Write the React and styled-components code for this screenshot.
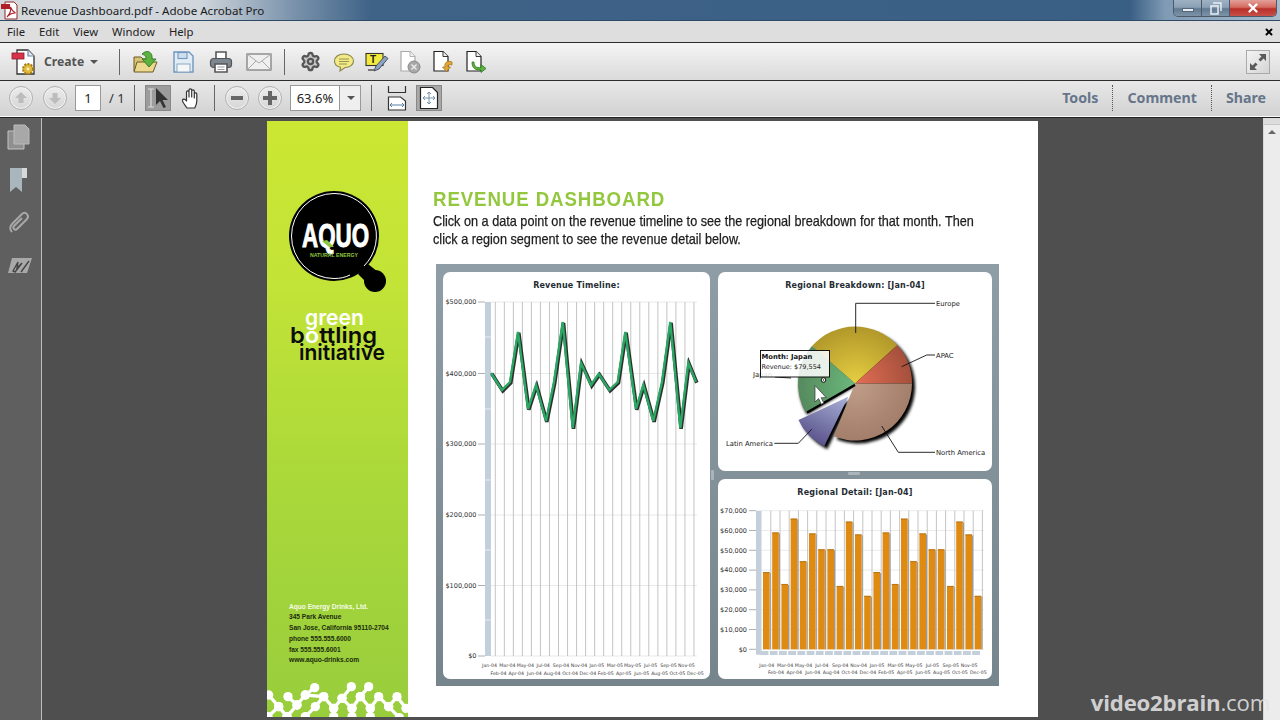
import React from "react";
import styled, { createGlobalStyle } from "styled-components";
import { Settings, X } from "lucide-react";

const GlobalStyle = createGlobalStyle`
  html, body { margin: 0; padding: 0; background: #4f4f4f; }
  * { box-sizing: border-box; }
  #root { width: 1280px; height: 720px; overflow: hidden; }
`;

const UI_FONT = `"Noto Sans", "Open Sans", sans-serif`;
const CHART_FONT = `"DejaVu Sans", sans-serif`;

const Shell = styled.div`
  position: relative;
  width: 1280px;
  height: 720px;
  display: flex;
  flex-direction: column;
  overflow: hidden;
  font-family: ${UI_FONT};
`;

/* ---------- window chrome ---------- */
const TitleBar = styled.div`
  height: 21px;
  flex: none;
  display: flex;
  align-items: flex-start;
  background: linear-gradient(90deg, #d4d8dc 0, #d0d6dc 200px, #7d95ad 290px, #3f6387 370px, #3a5f85 1130px, #7f9ab3 1165px, #a9bccd 1280px);
  border-bottom: 1px solid #2d4a66;
`;
const TitleIcon = styled.svg`
  width: 17px;
  height: 19px;
  margin: 1px 3px 0 1px;
  flex: none;
`;
const TitleText = styled.span`
  font-size: 11.6px;
  line-height: 21px;
  color: #1a1a1a;
`;
const WindowButtons = styled.div`
  margin-left: auto;
  margin-right: 3px;
  display: flex;
  height: 17px;
  border: 1px solid #4a5a6a;
  border-top: none;
  border-radius: 0 0 5px 5px;
  overflow: hidden;
`;
const WindowButton = styled.div`
  width: ${(p) => p.$w}px;
  display: flex;
  align-items: center;
  justify-content: center;
  background: ${(p) =>
    p.$close
      ? "linear-gradient(#e2a09a 0, #d56a60 45%, #b9302a 55%, #c85048 100%)"
      : "linear-gradient(#9fb2c4 0, #8ba0b4 45%, #627a90 55%, #7d93a8 100%)"};
  border-left: ${(p) => (p.$first ? "none" : "1px solid #4a5a6a")};
`;
const MinGlyph = styled.div`
  width: 12px;
  height: 4px;
  margin-top: 3px;
  background: #e6ecf2;
  border: 1px solid #54687a;
`;

const MenuBar = styled.div`
  height: 21px;
  flex: none;
  display: flex;
  align-items: center;
  gap: 14px;
  padding: 0 7px;
  background: #dedede;
  font-size: 11.3px;
  color: #222;
`;
const MenuClose = styled.span`
  margin-left: auto;
  margin-right: -1px;
  display: flex;
  color: #000;
`;

const ToolbarTop = styled.div`
  height: 38px;
  flex: none;
  display: flex;
  align-items: center;
  background: linear-gradient(#f5f5f5, #dadada);
  border-top: 1px solid #2c2c2c;
`;
const ToolbarBottom = styled.div`
  height: 37px;
  flex: none;
  display: flex;
  align-items: center;
  padding-bottom: 2px;
  background: linear-gradient(#e8e8e8, #d2d2d2);
  border-top: 1px solid #2c2c2c;
  border-bottom: 1px solid #fafafa;
`;
const CreateButton = styled.div`
  width: 119px;
  display: flex;
  align-items: center;
  padding-left: 11px;
  font-size: 12.2px;
  font-weight: 700;
  color: #555;
`;
const CreateLabel = styled.span`
  margin-left: 7px;
`;
const Caret = styled.span`
  width: 0;
  height: 0;
  margin-left: ${(p) => p.$ml || 6}px;
  border-left: 4px solid transparent;
  border-right: 4px solid transparent;
  border-top: 4px solid #555;
`;
const Divider = styled.div`
  width: 1px;
  height: 26px;
  flex: none;
  background: #666;
  margin-left: ${(p) => p.$ml || 0}px;
  margin-right: ${(p) => p.$mr || 0}px;
`;
const IconCell = styled.div`
  width: ${(p) => p.$w}px;
  height: 30px;
  flex: none;
  padding-left: ${(p) => p.$pl || 0}px;
  display: flex;
  align-items: center;
  justify-content: center;
  color: #555;
`;
const Expand = styled.div`
  margin-left: auto;
  margin-right: 10px;
  width: 24px;
  height: 24px;
  border: 1px solid #aaa;
  background: linear-gradient(135deg, #f4f4f4, #d4d4d4);
  display: flex;
  align-items: center;
  justify-content: center;
`;
const RoundButton = styled.div`
  width: 24px;
  height: 24px;
  flex: none;
  border-radius: 50%;
  border: 1px solid #b0b0b0;
  background: linear-gradient(#ececec, #d6d6d6);
  box-shadow: inset 0 0 0 1px #f2f2f2;
  display: flex;
  align-items: center;
  justify-content: center;
  margin-left: ${(p) => p.$ml}px;
`;
const PageInput = styled.div`
  width: 26px;
  height: 26px;
  flex: none;
  margin-left: 8px;
  background: #fff;
  border: 1px solid #999;
  font-size: 13px;
  color: #222;
  display: flex;
  align-items: center;
  justify-content: center;
`;
const PageTotal = styled.span`
  width: 33px;
  padding-left: 8px;
  font-size: 13px;
  color: #333;
  white-space: pre;
`;
const ToggleBox = styled.div`
  width: 26px;
  height: 26px;
  flex: none;
  background: ${(p) => p.$bg};
  border: 1px solid #888;
  margin-left: ${(p) => p.$ml || 0}px;
  display: flex;
  align-items: center;
  justify-content: center;
`;
const ZoomField = styled.div`
  width: 71px;
  height: 26px;
  flex: none;
  margin-left: 8px;
  display: flex;
  background: #fff;
  border: 1px solid #999;
  font-size: 13px;
  color: #222;
`;
const ZoomValue = styled.div`
  width: 48px;
  display: flex;
  align-items: center;
  justify-content: center;
`;
const ZoomDrop = styled.div`
  flex: 1;
  border-left: 1px solid #999;
  background: #efefef;
  display: flex;
  align-items: center;
  justify-content: center;
`;
const PaneLinks = styled.div`
  margin-left: auto;
  display: flex;
  align-items: center;
  height: 100%;
  padding-right: 14px;
`;
const PaneLink = styled.div`
  font-size: 14.2px;
  font-weight: 700;
  color: #66758a;
  padding: 0 14px;
  line-height: 26px;
  border-left: ${(p) => (p.$first ? "none" : "1px dotted #555")};
  &:last-child {
    padding-right: 0;
  }
`;

/* ---------- viewer ---------- */
const Viewer = styled.div`
  flex: 1;
  min-height: 0;
  display: flex;
  background: #4f4f4f;
  border-top: 1px solid #222;
`;
const Rail = styled.div`
  width: 42px;
  flex: none;
  background: #5f5f5f;
  border-right: 1px solid #bdbdbd;
  display: flex;
  flex-direction: column;
  align-items: center;
  gap: 13px;
  padding-top: 4px;
`;
const RailIcon = styled.svg`
  width: 30px;
  height: 30px;
  flex: none;
  margin-left: -3px;
`;
const Canvas = styled.div`
  flex: 1;
  min-width: 0;
  padding: 3px 0 0 225px;
`;
const Scrollbar = styled.div`
  width: 17px;
  flex: none;
  background: #ececec;
  border-left: 1px solid #d8d8d8;
`;
const ScrollCap = styled.div`
  height: 7px;
  background: #dcdcdc;
  border-bottom: 1px solid #c8c8c8;
`;
const ScrollArrow = styled.div`
  width: 0;
  height: 0;
  margin: 5px auto 0;
  border-left: 4px solid transparent;
  border-right: 4px solid transparent;
  border-bottom: 4px solid #666;
`;
const Watermark = styled.div`
  position: absolute;
  right: 10px;
  bottom: 4px;
  font-family: "Open Sans", sans-serif;
  font-size: 22.2px;
  line-height: 26px;
  font-weight: 700;
  color: rgba(226, 226, 226, 0.9);
  letter-spacing: -0.2px;
  & span {
    font-weight: 400;
  }
`;

/* ---------- pdf page ---------- */
const Page = styled.div`
  width: 771px;
  height: 596px;
  display: flex;
  background: #fff;
`;
const Sidebar = styled.div`
  width: 141px;
  flex: none;
  display: flex;
  flex-direction: column;
  background: linear-gradient(#cce733 0, #c2e337 28%, #a9d83a 62%, #98cd3c 100%);
`;
const LogoSvg = styled.svg`
  display: block;
  width: 105px;
  height: 107px;
  margin: 67px 0 0 18px;
  flex: none;
  overflow: visible;
`;
const MarkSvg = styled.svg`
  display: block;
  width: 105px;
  height: 60px;
  margin: 10px 0 0 18px;
  flex: none;
  overflow: visible;
`;
const Address = styled.div`
  margin-top: auto;
  padding-left: 22px;
  font-family: "Liberation Sans", sans-serif;
  font-size: 6.6px;
  font-weight: 700;
  line-height: 10.75px;
  color: #1c2c10;
  white-space: nowrap;
`;
const AddressName = styled.div`
  color: #f6fbe6;
`;
const PatternSvg = styled.svg`
  display: block;
  width: 141px;
  height: 36px;
  margin-top: 15px;
  flex: none;
`;
const Content = styled.div`
  flex: 1;
  min-width: 0;
  padding: 66px 0 0 25px;
`;
const Heading = styled.h1`
  margin: 0;
  font-family: "Liberation Sans", sans-serif;
  font-size: 21px;
  line-height: 24px;
  font-weight: 700;
  letter-spacing: 1px;
  color: #93c83e;
  white-space: nowrap;
  transform: scaleX(0.89);
  transform-origin: left center;
`;
const Intro = styled.p`
  margin: 1px 0 0;
  font-family: "Liberation Sans", sans-serif;
  font-size: 14.5px;
  line-height: 18px;
  font-weight: 400;
  color: #1c1c1c;
  -webkit-text-stroke: 0.25px #1c1c1c;
  white-space: nowrap;
  transform: scaleX(0.874);
  transform-origin: left center;
`;
const IntroLine = styled.span`
  display: block;
`;
const Board = styled.div`
  position: relative;
  width: 563px;
  height: 422px;
  margin: 16px 0 0 3px;
  padding: 8px 7px 7px;
  display: grid;
  grid-template-columns: 267px 274px;
  grid-template-rows: 199px 200px;
  gap: 8px;
  background: linear-gradient(#8f9da6, #76848c);
`;
const Card = styled.div`
  background: #fff;
  border-radius: 7px;
  overflow: hidden;
  display: flex;
  flex-direction: column;
  grid-row: ${(p) => p.$row || "auto"};
`;
const CardTitle = styled.div`
  height: 26px;
  flex: none;
  text-align: center;
  font-family: ${CHART_FONT};
  font-size: 8px;
  line-height: 27px;
  font-weight: 700;
  letter-spacing: 0.18px;
  color: #1f2d33;
`;
const ChartSvg = styled.svg`
  display: block;
  flex: none;
  font-family: ${CHART_FONT};
`;
const Handle = styled.div`
  position: absolute;
  background: #aab4ba;
  border-radius: 1px;
  left: ${(p) => p.$x}px;
  top: ${(p) => p.$y}px;
  width: ${(p) => p.$w}px;
  height: ${(p) => p.$h}px;
`;

/* ---------- chart data ---------- */
const months = ["Jan", "Feb", "Mar", "Apr", "May", "Jun", "Jul", "Aug", "Sep", "Oct", "Nov", "Dec"];
const monthLabels = [...months.map((m) => `${m}-04`), ...months.map((m) => `${m}-05`)];

// traced from the picture, page coordinates
const timeline = [
  [491, 373], [502, 390], [510, 382], [518, 332], [528, 409], [536, 385],
  [546, 421], [554, 382], [562.7, 322], [572.7, 428], [581, 363], [591, 385],
  [598.7, 374], [609.3, 390], [617.7, 382], [625.3, 332], [636, 409], [643.3, 385],
  [653.3, 421], [662, 382], [670.3, 322], [680.3, 428], [688.3, 363], [696, 382],
];
const regionValues = [39, 59, 33, 66, 44.5, 58.5, 50.5, 50.5, 32, 64.5, 58, 27];
const barValues = [...regionValues, ...regionValues];

const wedge = (cx, cy, r, a0, a1) => {
  const rad = (a) => (a * Math.PI) / 180;
  const x0 = cx + r * Math.cos(rad(a0));
  const y0 = cy + r * Math.sin(rad(a0));
  const x1 = cx + r * Math.cos(rad(a1));
  const y1 = cy + r * Math.sin(rad(a1));
  return `M${cx} ${cy}L${x0} ${y0}A${r} ${r} 0 ${a1 - a0 > 180 ? 1 : 0} 1 ${x1} ${y1}Z`;
};

/* ---------- charts ---------- */
const TimelineChart = () => {
  const ticks = [
    ["$500,000", 302], ["$400,000", 373.5], ["$300,000", 444],
    ["$200,000", 515], ["$100,000", 585.5], ["$0", 656],
  ];
  const points = timeline.map((p) => p.join(",")).join(" ");
  return (
    <ChartSvg width="267" height="381" viewBox="443 298 267 381">
      <defs>
        <filter id="lineShadow" x="-5%" y="-5%" width="110%" height="110%">
          <feGaussianBlur stdDeviation="0.5" />
        </filter>
      </defs>
      {ticks.map(([label, y]) => (
        <g key={label}>
          <line x1="491" x2="697" y1={y} y2={y} stroke="#e9e9e9" strokeWidth="1" />
          <line x1="478" x2="485" y1={y} y2={y} stroke="#999" strokeWidth="0.8" />
          <text x="476.5" y={y + 2.3} textAnchor="end" fontSize="6.5" fill="#333">{label}</text>
        </g>
      ))}
      <rect x="485" y="302" width="6" height="354" fill="#c3cfdb" />
      {[337, 409, 480, 550, 620].map((y) => (
        <line key={y} x1="485" x2="491" y1={y} y2={y} stroke="#e8edf2" strokeWidth="1" />
      ))}
      {timeline.slice(0, 23).map((_, i) => (
        <line key={i} x1={495.3 + i * 9.03} x2={495.3 + i * 9.03} y1="302" y2="656" stroke="#bdbdbd" strokeWidth="0.9" />
      ))}
      <polyline points={points} fill="none" stroke="#1a1a1a" strokeOpacity="0.9" strokeWidth="3.6" strokeLinejoin="miter" transform="translate(0.8 0.8)" filter="url(#lineShadow)" />
      <polyline points={points} fill="none" stroke="#2aa763" strokeWidth="2.4" strokeLinejoin="miter" />
      {monthLabels.map((m, i) => (
        <text key={m} x={489.5 + i * 8.95} y={i % 2 ? 675 : 667} textAnchor="middle" fontSize="4.7" fill="#444">{m}</text>
      ))}
    </ChartSvg>
  );
};

const PieChart = () => {
  const cx = 855;
  const cy = 383.5;
  const r = 57;
  const leaders = [
    "855.7,333 855.7,303.3 935,303.3",
    "901.7,366.7 926.7,355 935,355",
    "881.7,426 898.3,452.3 935,452.3",
    "811.7,429.3 798.3,443.3 774.3,443.3",
  ];
  return (
    <ChartSvg width="274" height="173" viewBox="718 298 274 173">
      <defs>
        <radialGradient id="yellowFill" gradientUnits="userSpaceOnUse" cx={cx} cy={cy} r={r}>
          <stop offset="0" stopColor="#e6cf42" />
          <stop offset="1" stopColor="#b2982a" />
        </radialGradient>
        <radialGradient id="redFill" gradientUnits="userSpaceOnUse" cx={cx} cy={cy} r={r}>
          <stop offset="0" stopColor="#e56e55" />
          <stop offset="1" stopColor="#a4503c" />
        </radialGradient>
        <radialGradient id="tanFill" gradientUnits="userSpaceOnUse" cx={cx} cy={cy} r={r}>
          <stop offset="0" stopColor="#c09e8a" />
          <stop offset="1" stopColor="#a37e6a" />
        </radialGradient>
        <radialGradient id="greenFill" gradientUnits="userSpaceOnUse" cx={cx} cy={cy} r={r}>
          <stop offset="0" stopColor="#6cb87c" />
          <stop offset="1" stopColor="#558a5e" />
        </radialGradient>
        <linearGradient id="purpleFill" x1="0.8" y1="0" x2="0.3" y2="1">
          <stop offset="0" stopColor="#a3aad2" />
          <stop offset="1" stopColor="#544c86" />
        </linearGradient>
        <filter id="pieShadow" x="-15%" y="-15%" width="130%" height="130%">
          <feGaussianBlur stdDeviation="1.4" />
        </filter>
      </defs>
      <path d={wedge(cx, cy, r, -139, 112)} fill="#000" transform="translate(3 3)" filter="url(#pieShadow)" />
      <path d={wedge(cx, cy, r, 149, 221)} fill="#000" transform="translate(1 2)" filter="url(#pieShadow)" />
      <path d={wedge(848.3, 396.7, 55, 116, 155)} fill="#000" transform="translate(3 3)" filter="url(#pieShadow)" />
      <path d={wedge(cx, cy, r, 221, 318)} fill="url(#yellowFill)" />
      <path d={wedge(cx, cy, r, -42, 0)} fill="url(#redFill)" />
      <path d={wedge(cx, cy, r, 0, 112)} fill="url(#tanFill)" />
      <path d={wedge(cx, cy, r, 149, 221)} fill="url(#greenFill)" />
      <line x1="855" y1="385" x2="807" y2="412.5" stroke="#000" strokeWidth="2.2" />
      <path d={wedge(848.3, 396.7, 55, 116, 155)} fill="url(#purpleFill)" />
      {leaders.map((pts) => (
        <polyline key={pts} points={pts} fill="none" stroke="#111" strokeWidth="0.9" />
      ))}
      <g fontSize="6.8" fill="#222">
        <text x="936" y="305.5">Europe</text>
        <text x="936" y="357.5">APAC</text>
        <text x="936" y="454.5">North America</text>
        <text x="773" y="445.5" textAnchor="end">Latin America</text>
        <text x="753" y="376.5">Japan</text>
      </g>
      <line x1="775" y1="377" x2="791" y2="378" stroke="#111" strokeWidth="0.9" />
      <rect x="760.5" y="350.5" width="69" height="26.5" fill="#fff" fillOpacity="0.86" stroke="#000" strokeWidth="0.9" />
      <text x="761.5" y="359" fontSize="6.8" fontWeight="700" fill="#111">Month: Japan</text>
      <text x="761.5" y="368.5" fontSize="6.5" fill="#222">Revenue: $79,554</text>
      <circle cx="823.5" cy="380" r="2.3" fill="#fff" stroke="#111" strokeWidth="1" />
      <circle cx="823.5" cy="380" r="0.7" fill="#111" />
      <path d="M815 385.5v16.5l3.6-3.4 2.6 5.6 2.6-1.100-2.6-5.4h5z" fill="#fff" stroke="#333" strokeWidth="0.7" />
    </ChartSvg>
  );
};

const BarChart = () => {
  const base = 649.3;
  const scale = 138.6 / 70;
  const ticks = [0, 10, 20, 30, 40, 50, 60, 70];
  return (
    <ChartSvg width="274" height="174" viewBox="718 505 274 174">
      {ticks.map((t) => {
        const y = base - t * scale;
        return (
          <g key={t}>
            <line x1="761" x2="984" y1={y} y2={y} stroke="#e9e9e9" strokeWidth="0.9" />
            <line x1="749" x2="756" y1={y} y2={y} stroke="#999" strokeWidth="0.8" />
            <text x="747" y={y + 2.3} textAnchor="end" fontSize="6.5" fill="#333">
              {t === 0 ? "$0" : `$${t},000`}
            </text>
          </g>
        );
      })}
      <rect x="756" y="510.7" width="5.5" height="144" fill="#c3cfdb" />
      {barValues.map((v, i) => {
        const x = 763 + i * 9.2;
        const y = base - v * scale;
        return (
          <g key={i}>
            <line x1={x + 7.8} x2={x + 7.8} y1="510.7" y2={base} stroke="#bdbdbd" strokeWidth="0.9" />
            <rect x={x - 2.4} y="651" width="7.8" height="4" fill="#c3cfdb" />
            <rect x={x + 6.6} y={y + 1} width="1.2" height={base - y - 1} fill="#9a9a9a" />
            <rect x={x} y={y} width="6.6" height={base - y} fill="#df8a10" />
            <rect x={x} y={y} width="6.6" height="1" fill="#b8761c" />
          </g>
        );
      })}
      {monthLabels.map((m, i) => (
        <text key={m} x={766.7 + i * 9.2} y={i % 2 ? 674 : 666.5} textAnchor="middle" fontSize="4.7" fill="#444">{m}</text>
      ))}
    </ChartSvg>
  );
};

/* ---------- brand drawings ---------- */
const AquoLogo = () => (
  <LogoSvg viewBox="285 188 105 107">
    <path d="M368 264 L358 274 L368 284 L378 272 Z" fill="#000" />
    <circle cx="334" cy="236" r="45" fill="#000" />
    <circle cx="375" cy="281" r="11" fill="#000" />
    <path d="M334 193.5a42.5 42.5 0 0 1 30 72.5" fill="none" stroke="#fff" strokeWidth="1" />
    <path d="M334 193.5a42.5 42.5 0 0 0 0 85c6 0 11-1 16-3.5" fill="none" stroke="#fff" strokeWidth="1" />
    <text x="302" y="247" fontFamily="Liberation Sans, sans-serif" fontWeight="700" fontSize="34" fill="#fff" stroke="#fff" strokeWidth="1" textLength="67" lengthAdjust="spacingAndGlyphs">AQUO</text>
    <path d="M322 241l5-1 7 7h-5z" fill="#8fc63f" />
    <text x="310" y="256.5" fontFamily="Liberation Sans, sans-serif" fontWeight="700" fontSize="5.2" fill="#8fc63f" textLength="48" lengthAdjust="spacingAndGlyphs">NATURAL ENERGY</text>
  </LogoSvg>
);

const BottlingMark = () => (
  <MarkSvg viewBox="285 305 105 60">
    <g fontFamily="Inter, sans-serif" fontWeight="600" fontSize="22">
      <text x="305" y="324.5" fill="#fff" textLength="59" lengthAdjust="spacingAndGlyphs">green</text>
      <text x="290" y="343" fill="#0c0c0c" textLength="87" lengthAdjust="spacingAndGlyphs">
        b<tspan fill="#fff">o</tspan>ttling
      </text>
      <text x="299" y="360" fill="#0c0c0c" textLength="86" lengthAdjust="spacingAndGlyphs">initiative</text>
    </g>
  </MarkSvg>
);

const BlobPattern = () => {
  const chains = [
    [[20, 60], [50, 95], [75, 125]],
    [[78, 65], [105, 90], [130, 60], [158, 38]],
    [[105, 90], [75, 125]],
    [[130, 60], [185, 65], [215, 100], [240, 70], [268, 35]],
    [[185, 65], [160, 95], [130, 125]],
    [[240, 70], [270, 100], [295, 65], [320, 35]],
    [[295, 65], [325, 100], [350, 65], [380, 95], [405, 65], [432, 100]],
    [[380, 95], [412, 128]],
    [[270, 100], [270, 125]],
    [[215, 100], [215, 125]],
    [[325, 100], [325, 125]],
    [[50, 95], [18, 125]],
  ];
  return (
    <PatternSvg viewBox="15 18 423 108">
      {chains.map((pts) => (
        <g key={pts.join()}>
          <polyline points={pts.join(" ")} fill="none" stroke="#fff" strokeWidth="10" strokeLinejoin="round" />
          {pts.map(([x, y]) => (
            <circle key={`${x}-${y}`} cx={x} cy={y} r="14" fill="#fff" />
          ))}
        </g>
      ))}
    </PatternSvg>
  );
};

/* ---------- toolbar drawings ---------- */
const Ico = ({ w = 24, h = 24, vb = "0 0 24 24", children }) => (
  <svg width={w} height={h} viewBox={vb}>{children}</svg>
);

const CreateIcon = () => (
  <Ico w={26} h={30} vb="0 0 26 30">
    <path d="M6 3h11l6 6v18H6z" fill="#fff" stroke="#333" strokeWidth="1.3" />
    <path d="M17 3v6h6" fill="#dfe6ee" stroke="#6a87a8" strokeWidth="1.2" />
    <rect x="1" y="6" width="12" height="6" fill="#d8324a" stroke="#8a1c2c" strokeWidth="0.8" />
    <circle cx="17" cy="22" r="5" fill="#e4b83a" stroke="#a07c18" strokeWidth="2" strokeDasharray="2 1.2" />
    <circle cx="17" cy="22" r="1.4" fill="#fff3c4" />
  </Ico>
);
const OpenIcon = () => (
  <Ico w={26} h={26} vb="0 0 26 26">
    <path d="M2 22V8h7l2 2h10v12z" fill="#d9c277" stroke="#6a5a22" strokeWidth="1" />
    <path d="M2 23l3-10h20l-4 10z" fill="#ecd98f" stroke="#6a5a22" strokeWidth="1" />
    <path d="M10 5c4-4 9-3 10 2v3h4l-7 8-7-8h4V8c-1-2-2-2-4-3z" fill="#5cb13f" stroke="#2f7a22" strokeWidth="0.9" />
  </Ico>
);
const SaveIcon = () => (
  <Ico>
    <path d="M3 2h15l4 4v16H3z" fill="#e2ecf5" stroke="#6f97bf" strokeWidth="1.4" />
    <rect x="7" y="2.5" width="9" height="6" fill="#cfdeec" stroke="#6f97bf" strokeWidth="1.1" />
    <rect x="6" y="14" width="13" height="8" fill="#f6f6f6" stroke="#8aa8c6" strokeWidth="1" />
  </Ico>
);
const PrintIcon = () => (
  <Ico>
    <path d="M7 9V2h10v7" fill="#fff" stroke="#555" strokeWidth="1.6" />
    <rect x="1.5" y="8.5" width="21" height="9" rx="3" fill="#7d8790" stroke="#555" strokeWidth="1.2" />
    <path d="M6 14h12v8H6z" fill="#fff" stroke="#555" strokeWidth="1.6" />
    <path d="M8.5 17h7M8.5 19.5h7" stroke="#999" strokeWidth="1" />
  </Ico>
);
const MailIcon = () => (
  <Ico w={26} h={20} vb="0 0 26 20">
    <rect x="1" y="2" width="24" height="16" fill="#efefef" stroke="#777" strokeWidth="1.2" />
    <path d="M1 2l12 9 12-9M1 18l9-9M25 18l-9-9" fill="none" stroke="#aaa" strokeWidth="1" />
  </Ico>
);
const CommentIcon = () => (
  <Ico w={22} h={20} vb="0 0 22 20">
    <path d="M11 2C5.5 2 1.5 5 1.5 9c0 3 2.5 5.5 6 6.3L7 19l5-3.5c5 0 8.5-3 8.5-6.5S16.5 2 11 2z" fill="#f3ea86" stroke="#87864c" strokeWidth="1.1" />
    <path d="M6 7h10M6 9.5h10M6 12h8" stroke="#8d8c50" strokeWidth="0.9" />
  </Ico>
);
const TextNoteIcon = () => (
  <Ico>
    <rect x="1" y="3.5" width="17" height="12" fill="#f2ea3c" stroke="#333" strokeWidth="1.1" />
    <text x="5" y="13" fontFamily="Liberation Sans, sans-serif" fontWeight="700" fontSize="10" fill="#222">T</text>
    <path d="M9 21l2-5L20 6l3 2.5-9 10.5z" fill="#8aa4c4" stroke="#445" strokeWidth="0.9" />
    <path d="M3 19h6v2H3z" fill="#777" />
  </Ico>
);
const DocBase = ({ stroke = "#222", children }) => (
  <Ico w={22} h={24} vb="0 0 22 24">
    <path d="M2 1.5h9l5 5V21H2z" fill="#fff" stroke={stroke} strokeWidth="1.2" />
    <path d="M11 1.5v5h5" fill="#eef2f6" stroke={stroke} strokeWidth="0.9" />
    {children}
  </Ico>
);
const UpDownIcon = ({ dir }) => (
  <svg width="14" height="14" viewBox="0 0 14 14">
    <path d={dir === "up" ? "M7 1l6 6H9.5v5h-5V7H1z" : "M7 13l6-6H9.5V2h-5v5H1z"} fill="#bcbcbc" />
  </svg>
);
const SelectIcon = () => (
  <Ico w={24} h={24}>
    <path d="M2 3h6M5 3v18M2 21h6" fill="none" stroke="#ddd" strokeWidth="1.2" />
    <path d="M10 2v17l4-4 3.5 7 2.5-1-3.5-7h5.5z" fill="#333" />
  </Ico>
);
const HandIcon = () => (
  <Ico w={22} h={24} vb="0 0 22 24">
    <path d="M6 22c-2-3-5-6-4.5-8 .5-1.5 2.5-1 4 1V6c0-1.5 2.5-1.5 2.5 0v5V4c0-1.5 2.7-1.5 2.7 0v7V5c0-1.5 2.6-1.5 2.6 0v7V8c0-1.5 2.5-1.5 2.5 0v7c0 3-1 5-2 7z" fill="#fff" stroke="#333" strokeWidth="1.2" strokeLinejoin="round" />
  </Ico>
);
const FitWidthIcon = () => (
  <Ico w={20} h={26} vb="0 0 20 26">
    <path d="M1.5 1v6.5h17V1" fill="none" stroke="#333" strokeWidth="1.2" />
    <path d="M1.5 25V12h12l5 4v9z" fill="#fff" stroke="#333" strokeWidth="1.2" />
    <path d="M3 20h14M3 20l2-2M3 20l2 2M17 20l-2-2M17 20l-2 2" stroke="#5a7ea6" strokeWidth="1" fill="none" />
  </Ico>
);
const FitPageIcon = () => (
  <Ico w={20} h={24} vb="0 0 20 24">
    <path d="M1.5 1.5h12l5 5v16h-17z" fill="#fff" stroke="#222" strokeWidth="1.2" />
    <path d="M10 6v12M4 12h12M10 6l-2 2M10 6l2 2M10 18l-2-2M10 18l2-2M4 12l2-2M4 12l2 2M16 12l-2-2M16 12l-2 2" stroke="#6a8aa8" strokeWidth="0.9" fill="none" />
  </Ico>
);

export default function App() {
  return (
    <Shell>
      <GlobalStyle />
      <TitleBar>
        <TitleIcon viewBox="0 0 17 19">
          <path d="M4 1h9l3 3v14H4z" fill="#fff" stroke="#8a2a2a" strokeWidth="1" />
          <rect x="0" y="3" width="9" height="5" fill="#b01e28" />
          <path d="M6 16c3-3 4-7 3.5-10 1 3 3 5 5 6-3 0-6 1-8.5 4z" fill="none" stroke="#b01e28" strokeWidth="1.1" />
        </TitleIcon>
        <TitleText>Revenue Dashboard.pdf - Adobe Acrobat Pro</TitleText>
        <WindowButtons>
          <WindowButton $w={27} $first>
            <MinGlyph />
          </WindowButton>
          <WindowButton $w={28}>
            <svg width="13" height="13" viewBox="0 0 13 13">
              <path d="M4 1h8v8M2 4h7v8H2z" fill="none" stroke="#e8eef4" strokeWidth="1.5" />
            </svg>
          </WindowButton>
          <WindowButton $w={47} $close>
            <X size={14} strokeWidth={4} color="#fff" />
          </WindowButton>
        </WindowButtons>
      </TitleBar>

      <MenuBar>
        <span>File</span>
        <span>Edit</span>
        <span>View</span>
        <span>Window</span>
        <span>Help</span>
        <MenuClose>
          <X size={10} strokeWidth={4.5} />
        </MenuClose>
      </MenuBar>

      <ToolbarTop>
        <CreateButton>
          <CreateIcon />
          <CreateLabel>Create</CreateLabel>
          <Caret $ml={6} />
        </CreateButton>
        <Divider $mr={6} />
        <IconCell $w={38}><OpenIcon /></IconCell>
        <IconCell $w={38}><SaveIcon /></IconCell>
        <IconCell $w={38}><PrintIcon /></IconCell>
        <IconCell $w={38}><MailIcon /></IconCell>
        <Divider $ml={6} $mr={9} />
        <IconCell $w={33}><Settings size={21} strokeWidth={2.6} color="#555" fill="#c8c8c8" /></IconCell>
        <IconCell $w={33}><CommentIcon /></IconCell>
        <IconCell $w={33}><TextNoteIcon /></IconCell>
        <IconCell $w={33}>
          <DocBase stroke="#aaa">
            <circle cx="15" cy="17" r="6" fill="#a8a8a8" stroke="#8a8a8a" />
            <path d="M12.5 14.5l5 5M17.5 14.5l-5 5" stroke="#eee" strokeWidth="1.3" />
          </DocBase>
        </IconCell>
        <IconCell $w={33}>
          <DocBase>
            <path d="M20 12c-5-2-8 1-7 5h-2.5l4 4.5 4-4.5H16c-.5-2 1-3 4-2z" fill="#e0a63a" stroke="#a87618" strokeWidth="0.8" />
          </DocBase>
        </IconCell>
        <IconCell $w={33}>
          <DocBase>
            <path d="M9 12c0 5 3 6 7 5.5V14.5l5 4-5 4V20c-6 .5-9-2-9-8z" fill="#5cb13f" stroke="#2f7a22" strokeWidth="0.8" />
          </DocBase>
        </IconCell>
        <Expand>
          <svg width="20" height="20" viewBox="0 0 20 20">
            <path d="M11 2h7v7l-2.5-2.500-3 3-2-2 3-3zM9 18H2v-7l2.5 2.500 3-3 2 2-3 3z" fill="#5a5a5a" />
          </svg>
        </Expand>
      </ToolbarTop>

      <ToolbarBottom>
        <RoundButton $ml={9}><UpDownIcon dir="up" /></RoundButton>
        <RoundButton $ml={10}><UpDownIcon dir="down" /></RoundButton>
        <PageInput>1</PageInput>
        <PageTotal>/ 1</PageTotal>
        <Divider />
        <ToggleBox $ml={10} $bg="#9c9c9c"><SelectIcon /></ToggleBox>
        <IconCell $w={38} $pl={4}><HandIcon /></IconCell>
        <Divider $ml={5} />
        <RoundButton $ml={10}>
          <svg width="14" height="14" viewBox="0 0 14 14"><rect x="1" y="5" width="12" height="4" fill="#666" /></svg>
        </RoundButton>
        <RoundButton $ml={9}>
          <svg width="16" height="16" viewBox="0 0 16 16"><path d="M6 1h4v5h5v4h-5v5H6v-5H1V6h5z" fill="#666" /></svg>
        </RoundButton>
        <ZoomField>
          <ZoomValue>63.6%</ZoomValue>
          <ZoomDrop><Caret $ml={1} /></ZoomDrop>
        </ZoomField>
        <Divider $ml={10} />
        <IconCell $w={44} $pl={6}><FitWidthIcon /></IconCell>
        <ToggleBox $bg="#a8a8a8"><FitPageIcon /></ToggleBox>
        <PaneLinks>
          <PaneLink $first>Tools</PaneLink>
          <PaneLink>Comment</PaneLink>
          <PaneLink>Share</PaneLink>
        </PaneLinks>
      </ToolbarBottom>

      <Viewer>
        <Rail>
          <RailIcon viewBox="0 0 30 30">
            <path d="M4 9h16v18H4z" fill="#8f8f8f" stroke="#c4c4c4" />
            <path d="M10 3h11l4 4v15H10z" fill="#a8a8a8" stroke="#bbb" />
          </RailIcon>
          <RailIcon viewBox="0 0 30 30">
            <path d="M6 3h12v24l-6-5-6 5z" fill="#a9b7bd" />
            <path d="M18 3h5v10h-5z" fill="#d8d8d8" />
          </RailIcon>
          <RailIcon viewBox="0 0 30 30">
            <path d="M8 24c-3-3-2-6 1-9l9-9c3-3 8 1 5 5L13 21c-2 2-5-1-3-3l8-8" fill="none" stroke="#a8a8a8" strokeWidth="2" />
          </RailIcon>
          <RailIcon viewBox="0 0 30 30">
            <path d="M8 7h20l-5 15H4z" fill="#a8a8a8" />
            <path d="M9 20l5-9-1 6 5-5-7 9zM17 21l8-11" stroke="#444" strokeWidth="1.4" fill="none" />
          </RailIcon>
        </Rail>
        <Canvas>
          <Page>
            <Sidebar>
              <AquoLogo />
              <BottlingMark />
              <Address>
                <AddressName>Aquo Energy Drinks, Ltd.</AddressName>
                <div>345 Park Avenue</div>
                <div>San Jose, California 95110-2704</div>
                <div>phone 555.555.6000</div>
                <div>fax 555.555.6001</div>
                <div>www.aquo-drinks.com</div>
              </Address>
              <BlobPattern />
            </Sidebar>
            <Content>
              <Heading>REVENUE DASHBOARD</Heading>
              <Intro>
                <IntroLine>Click on a data point on the revenue timeline to see the regional breakdown for that month. Then</IntroLine>
                <IntroLine>click a region segment to see the revenue detail below.</IntroLine>
              </Intro>
              <Board>
                <Card $row="1 / span 2">
                  <CardTitle>Revenue Timeline:</CardTitle>
                  <TimelineChart />
                </Card>
                <Card>
                  <CardTitle>Regional Breakdown: [Jan-04]</CardTitle>
                  <PieChart />
                </Card>
                <Card>
                  <CardTitle>Regional Detail: [Jan-04]</CardTitle>
                  <BarChart />
                </Card>
                <Handle $x={275} $y={206} $w={3} $h={10} />
                <Handle $x={412} $y={208} $w={12} $h={3} />
              </Board>
            </Content>
          </Page>
        </Canvas>
        <Scrollbar>
          <ScrollCap />
          <ScrollArrow />
        </Scrollbar>
      </Viewer>
      <Watermark>video2brain<span>.com</span></Watermark>
    </Shell>
  );
}
